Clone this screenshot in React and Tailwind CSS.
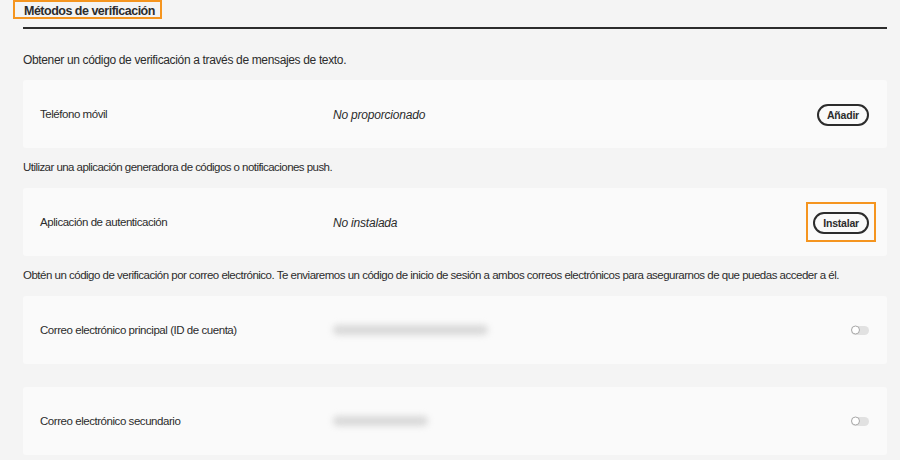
const font = { fontFamily: '"Liberation Sans", Arial, sans-serif' };

function Toggle() {
  return (
    <div className="relative h-[9px] w-[18px] rounded-full bg-[#e1e1e1]">
      <div className="absolute left-0 top-1/2 h-[9px] w-[9px] -translate-y-1/2 rounded-full border-[1.5px] border-[#a8a8a8] bg-white" />
    </div>
  );
}

function PillButton({ children }) {
  return (
    <button className="h-[22px] rounded-full border-2 border-[#2c2c2c] px-[8px] text-[10.5px] font-bold leading-none tracking-[-0.2px] text-[#2c2c2c]">
      {children}
    </button>
  );
}

function Blurred({ width }) {
  return <div className="h-[10px] rounded-full bg-[#d9d9d9] blur-[3px]" style={{ width }} />;
}

function Row({ label, value, action }) {
  return (
    <div className="flex h-[68px] items-center rounded-[3px] bg-[#fafafa] pl-[17px] pr-[18px]">
      <div className="w-[293px] pt-[2px] text-[11.5px] tracking-[-0.45px] text-[#2c2c2c]">{label}</div>
      <div className="flex-1">{value}</div>
      <div>{action}</div>
    </div>
  );
}

function Value({ children }) {
  return <span className="text-[12px] italic tracking-[-0.2px] text-[#2c2c2c]">{children}</span>;
}

function Description({ className, children }) {
  return (
    <p className={`flex h-[40px] items-center whitespace-nowrap text-[#2c2c2c] ${className}`}>{children}</p>
  );
}

export default function App() {
  return (
    <div className="h-[460px] w-[900px] overflow-hidden bg-[#f4f4f4]" style={font}>
      <div className="pl-[23px] pr-[13px]">
        <div className="relative h-[27px]">
          <h2 className="pl-px pt-[2px] text-[12.5px] font-bold tracking-[-0.5px] text-[#2c2c2c]">Métodos de verificación</h2>
          <div className="absolute -left-[10px] top-0 h-[19px] w-[149px] border-2 border-[#f5951f]" />
        </div>
        <div className="h-[2px] bg-[#2c2c2c]" />
        <div className="h-[11px]" />
        <Description className="text-[12px] tracking-[-0.35px]">
          Obtener un código de verificación a través de mensajes de texto.
        </Description>
        <Row label="Teléfono móvil" value={<Value>No proporcionado</Value>} action={<PillButton>Añadir</PillButton>} />
        <Description className="text-[11.5px] tracking-[-0.55px]">
          Utilizar una aplicación generadora de códigos o notificaciones push.
        </Description>
        <Row
          label="Aplicación de autenticación"
          value={<Value>No instalada</Value>}
          action={
            <div className="relative">
              <PillButton>Instalar</PillButton>
              <div className="absolute -inset-x-[7px] -inset-y-[8px] border-2 border-[#f5951f]" />
            </div>
          }
        />
        <Description className="text-[11.5px] tracking-[-0.5px]">
          Obtén un código de verificación por correo electrónico. Te enviaremos un código de inicio de sesión a ambos correos electrónicos para asegurarnos de que puedas acceder a él.
        </Description>
        <Row label="Correo electrónico principal (ID de cuenta)" value={<Blurred width={155} />} action={<Toggle />} />
        <div className="h-[23px]" />
        <Row label="Correo electrónico secundario" value={<Blurred width={95} />} action={<Toggle />} />
      </div>
    </div>
  );
}
